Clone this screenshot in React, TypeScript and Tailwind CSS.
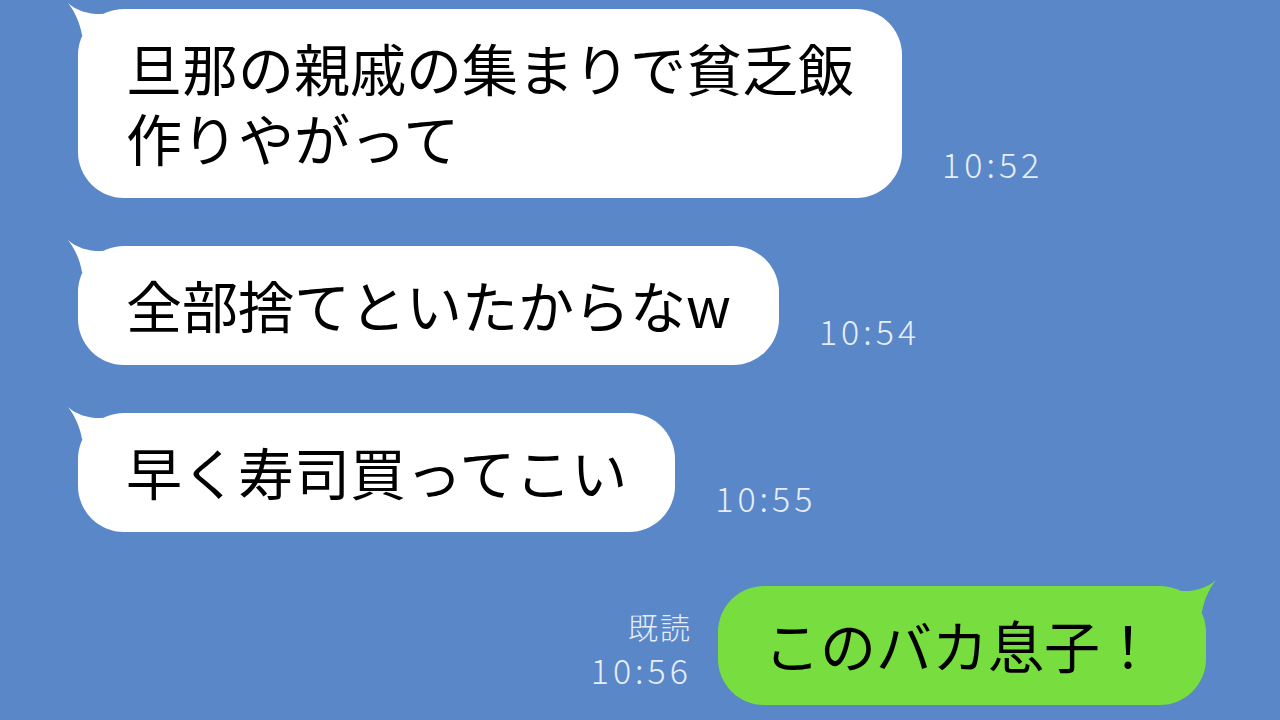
import React from 'react';

const jp = { fontFamily: '"Noto Sans CJK JP", "Noto Sans", sans-serif' };

const Tail = ({ side, color }: { side: 'left' | 'right'; color: string }) => (
  <svg
    width="50"
    height="50"
    viewBox="0 0 50 50"
    className={side === 'left' ? 'absolute -left-[12px] -top-[8px]' : 'absolute -right-[12px] -top-[8px] -scale-x-100'}
  >
    <path d="M2 2 C9 11 14 22 16 34 L32 44 L46 12 C30 15 13 12 2 2 Z" fill={color} />
  </svg>
);

const Incoming = ({ lines, time }: { lines: string[]; time: string }) => (
  <div className="flex items-end">
    <div className="relative bg-white rounded-[46px] px-[48px] pt-[23px] pb-[26px]">
      <Tail side="left" color="#ffffff" />
      <div className="relative text-[56px] leading-[70px] text-black whitespace-nowrap" style={jp}>
        {lines.map((l) => (
          <div key={l}>{l}</div>
        ))}
      </div>
    </div>
    <div className="ml-[40px] mb-[17px] text-[34px] leading-none font-light tracking-[4px] text-[#e6edf8]" style={jp}>
      {time}
    </div>
  </div>
);

export default function App() {
  return (
    <div className="w-[1280px] h-[720px] overflow-hidden bg-[#5a87c8] pl-[78px] pr-[74px] pt-[9px]">
      <div className="flex flex-col gap-[48px]">
        <Incoming lines={['旦那の親戚の集まりで貧乏飯', '作りやがって']} time="10:52" />
        <Incoming lines={['全部捨てといたからなw']} time="10:54" />
        <Incoming lines={['早く寿司買ってこい']} time="10:55" />
        <div className="flex items-end justify-end mt-[6px]">
          <div className="flex flex-col items-end -mr-[4px] mb-[18px] text-[#e6edf8]" style={jp}>
            <div className="text-[30px] leading-none font-light tracking-[2px]">既読</div>
            <div className="text-[34px] leading-none font-light tracking-[4px] mt-[12px]">10:56</div>
          </div>
          <div className="relative ml-[30px] bg-[#78dd3e] rounded-[46px] pl-[46px] pr-[50px] pt-[23px] pb-[26px]">
            <Tail side="right" color="#78dd3e" />
            <div className="relative text-[56px] leading-[70px] text-black whitespace-nowrap" style={jp}>
              このバカ息子！
            </div>
          </div>
        </div>
      </div>
    </div>
  );
}
